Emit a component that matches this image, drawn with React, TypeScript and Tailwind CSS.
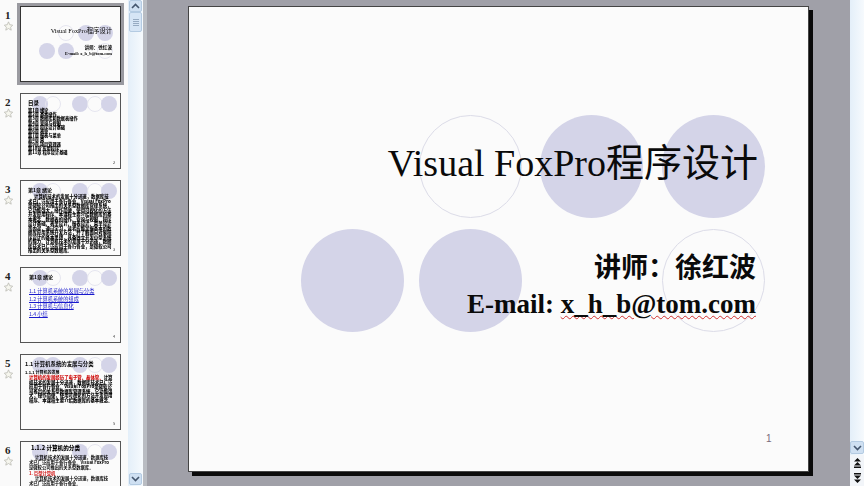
import React from "react";

type C = { x: number; y: number; o?: boolean };

function Dot({ x, y, o }: C) {
  return (
    <span
      style={{ left: x - 8, top: y - 8 }}
      className={
        o
          ? "absolute w-[16px] h-[16px] rounded-full border border-[#e6e6f0]"
          : "absolute w-[16px] h-[16px] rounded-full bg-[#d4d4e8]"
      }
    />
  );
}

const topDots: C[] = [
  { x: 19, y: 10 },
  { x: 32, y: 10, o: true },
  { x: 59, y: 10 },
  { x: 74, y: 10, o: true },
  { x: 88, y: 10 },
];

function Thumb({
  n,
  dots,
  children,
  selected,
}: {
  n: number;
  dots: C[];
  children: React.ReactNode;
  selected?: boolean;
}) {
  return (
    <div className="flex h-[87px] shrink-0">
      <div className="w-[20px] pl-[3px] pt-[3px] flex flex-col items-start">
        <span className="pl-[2px] text-[11px] leading-[12px] font-bold font-['Liberation_Serif',serif] text-[#222]">{n}</span>
        <svg width="11" height="10" viewBox="0 0 24 24" fill="#f6f6ee" stroke="#bcbcb4" strokeWidth="2">
          <path d="M12 2l3 7 7 1-5 5 1.5 7-6.5-4-6.5 4L7 15l-5-5 7-1z" />
        </svg>
      </div>
      <div
        className={
          selected
            ? "w-[101px] h-[76px] bg-[#fbfbfb] border border-[#333] outline-[3px] outline-[#9a9aa0] relative overflow-hidden blur-[0.3px]"
            : "w-[101px] h-[76px] bg-[#fbfbfb] border border-[#555] relative overflow-hidden blur-[0.3px]"
        }
      >
        {dots.map((d, i) => (
          <Dot key={i} {...d} />
        ))}
        <div className="relative h-full font-['Noto_Sans_CJK_SC','Liberation_Sans',sans-serif] text-black">{children}</div>
      </div>
    </div>
  );
}

const para3 =
  "计算机技术的发展十分迅速，数据库技术已广泛应用于各行各业。Visual FoxPro是微软公司推出的关系型数据库管理系统，它功能强大，操作简便，使用可视化的方法开发应用程序。本课程主要介绍数据库的基本概念、数据表的操作、查询与视图、程序设计基础、表单设计、报表设计、菜单设计等内容，通过学习，读者应能掌握基本的数据库应用系统开发方法，并了解面向对象程序设计的基本思想，具备独立开发小型系统的能力。计算机技术的发展十分迅速，数据库技术已广泛应用于各行各业，是微软公司推出的关系型数据库。";

const para5 =
  "计算机技术的发展十分迅速，数据库技术已广泛应用于各行各业。Visual FoxPro是微软公司推出的关系型数据库管理系统，它功能强大，操作简便，使用可视化的方法开发应用程序。本课程主要介绍数据库的基本概念。";

export default function App() {
  return (
    <div className="w-[864px] h-[486px] overflow-hidden flex bg-[#a0a0a8]">
      <div className="w-[128px] shrink-0 bg-[#fafafa] flex flex-col pt-[6px] overflow-hidden">
        <Thumb n={1} selected dots={[{ x: 45, y: 26, o: true }, { x: 65, y: 26 }, { x: 84, y: 26 }, { x: 26, y: 44 }, { x: 45, y: 44 }, { x: 84, y: 44, o: true }]}>
          <div className="flex flex-col items-end pr-[8px] pt-[20px]">
            <div className="text-[6.3px] leading-[8px] font-['Liberation_Serif','Noto_Sans_CJK_SC',serif]">Visual FoxPro程序设计</div>
            <div className="text-[4.6px] leading-[7px] font-bold mt-[9px]">讲师：徐红波</div>
            <div className="text-[4.4px] leading-[6px] font-bold font-['Liberation_Serif',serif]">E-mail: x_h_b@tom.com</div>
          </div>
        </Thumb>
        <Thumb n={2} dots={topDots}>
          <div className="pl-[7px] pt-[5px]">
            <div className="text-[5.5px] leading-[9px] font-bold">目录</div>
            {["第1章 绪论", "第2章 基本操作", "第3章 数据库和数据表操作", "第4章 查询与视图", "第5章 程序设计基础", "第6章 表单", "第7章 报表与菜单", "第8章 类", "第9章 项目管理器", "第10章 应用程序", "第11章 程序设计基础"].map((t) => (
              <div key={t} className="text-[4.2px] leading-[4.2px] font-black whitespace-nowrap">{t}</div>
            ))}
            <div className="absolute right-[5px] bottom-[3px] text-[3px] leading-[4px]">2</div>
          </div>
        </Thumb>
        <Thumb n={3} dots={topDots}>
          <div className="px-[7px] pt-[5px]">
            <div className="text-[5px] leading-[8px] font-bold">第1章 绪论</div>
            <div className="text-[4.4px] leading-[4.5px] font-black indent-[6px]">{para3}</div>
            <div className="absolute right-[5px] bottom-[3px] text-[3px] leading-[4px]">3</div>
          </div>
        </Thumb>
        <Thumb n={4} dots={topDots}>
          <div className="pl-[8px] pt-[5px]">
            <div className="text-[5px] leading-[8px] font-bold mb-[6px]">第1章 绪论</div>
            {["1.1 计算机系统的发展与分类", "1.2 计算机系统的组成", "1.3 计算机与信息化", "1.4 小结"].map((t) => (
              <div key={t} className="text-[5.2px] leading-[7.5px] text-[#1a1acc] underline whitespace-nowrap">{t}</div>
            ))}
            <div className="absolute right-[5px] bottom-[3px] text-[3px] leading-[4px]">4</div>
          </div>
        </Thumb>
        <Thumb n={5} dots={[{ x: 19, y: 10 }, { x: 32, y: 10 }, { x: 59, y: 10 }, { x: 74, y: 10, o: true }, { x: 88, y: 10 }]}>
          <div className="pl-[4px] pt-[5px]">
            <div className="text-[5.4px] leading-[8px] font-bold mb-[2px] whitespace-nowrap">1.1 计算机系统的发展与分类</div>
            <div className="text-[4px] leading-[5px] font-bold">1.1.1 计算机的发展</div>
            <div className="text-[4.4px] leading-[4.5px] font-black pl-[4px] pr-[6px]">
              <span className="text-[#d01010]">计算机的发展经历了电子管、晶体管、</span>
              {para5}
            </div>
            <div className="absolute right-[5px] bottom-[3px] text-[3px] leading-[4px]">5</div>
          </div>
        </Thumb>
        <Thumb n={6} dots={topDots}>
          <div className="px-[8px] pt-[2px]">
            <div className="text-[5.6px] leading-[8px] font-black mb-[3px] pl-[2px] whitespace-nowrap">1.1.2 计算机的分类</div>
            <div className="text-[4.3px] leading-[5px] font-bold indent-[6px]">计算机技术的发展十分迅速，数据库技术已广泛应用于各行各业。Visual FoxPro是微软公司推出的关系型数据库。</div>
            <div className="text-[4.3px] leading-[6px] font-bold text-[#d01010]">1. 巨型计算机</div>
            <div className="text-[4.3px] leading-[5px] font-bold indent-[6px]">计算机技术的发展十分迅速，数据库技术已广泛应用于各行各业。</div>
          </div>
        </Thumb>
      </div>

      <div className="w-[15px] shrink-0 bg-gradient-to-r from-[#e4eff9] to-[#f6fafd] flex flex-col justify-between">
        <div className="flex flex-col items-center">
          <div className="w-[13px] h-[12px] bg-[#cfe0f2] border border-[#b4cbe2] rounded-[2px] flex items-center justify-center">
            <svg width="9" height="6" viewBox="0 0 9 6" fill="none" stroke="#44566e" strokeWidth="1.6"><path d="M1 5l3.5-3.5L8 5" /></svg>
          </div>
          <div className="w-[13px] h-[20px] bg-[#d6e5f5] border border-[#b4cbe2] rounded-[2px] flex flex-col items-center justify-center gap-[1px]">
            <span className="w-[6px] h-px bg-[#97abc2]" />
            <span className="w-[6px] h-px bg-[#97abc2]" />
            <span className="w-[6px] h-px bg-[#97abc2]" />
            <span className="w-[6px] h-px bg-[#97abc2]" />
          </div>
        </div>
        <div className="flex justify-center pb-[1px]">
          <div className="w-[13px] h-[12px] bg-[#cfe0f2] border border-[#b4cbe2] rounded-[2px] flex items-center justify-center">
            <svg width="9" height="6" viewBox="0 0 9 6" fill="none" stroke="#44566e" strokeWidth="1.6"><path d="M1 1l3.5 3.5L8 1" /></svg>
          </div>
        </div>
      </div>
      <div className="w-[4px] shrink-0 bg-[#b9bcc2]" />

      <div className="flex-1 pl-[41px] pt-[6px]">
        <div className="relative w-[621px] h-[466px] bg-[#fbfbfb] border border-[#444] shadow-[4px_4px_0_#0a0a0a]">
          {[
            { x: 230, y: 108, o: true },
            { x: 351, y: 108 },
            { x: 473, y: 108 },
            { x: 112, y: 222 },
            { x: 230, y: 222 },
            { x: 473, y: 222, o: true },
          ].map((c, i) => (
            <span
              key={i}
              style={{ left: c.x, top: c.y }}
              className={
                c.o
                  ? "absolute w-[103px] h-[103px] rounded-full border border-[#dcdce8]"
                  : "absolute w-[103px] h-[103px] rounded-full bg-[#d4d4e8]"
              }
            />
          ))}
          <div className="relative flex flex-col items-end pr-[50px] pt-[132px] font-['Liberation_Serif','Noto_Sans_CJK_SC',serif] text-[#0a0a0a]">
            <div className="text-[38px] leading-[48px] whitespace-nowrap">Visual FoxPro程序设计</div>
            <div className="text-[27px] leading-[38px] font-bold mt-[60px] pr-[2px] font-['Noto_Sans_CJK_SC',sans-serif] whitespace-nowrap">讲师：徐红波</div>
            <div className="text-[27px] leading-[38px] font-bold pr-[2px] whitespace-nowrap">
              E-mail: <span className="underline decoration-wavy decoration-[#d03030] decoration-1 underline-offset-2">x_h_b@tom.com</span>
            </div>
          </div>
          <div className="absolute left-[577px] top-[425px] text-[10px] leading-[14px] text-[#7a6a7a] font-['Liberation_Sans',sans-serif]">1</div>
        </div>
      </div>

      <div className="w-[14px] shrink-0 bg-gradient-to-r from-[#e4eff9] to-[#f6fafd] flex flex-col justify-end">
        <div className="h-[13px] mb-[1px] bg-[#cfe0f2] border border-[#b4cbe2] rounded-[2px] flex items-center justify-center">
          <svg width="9" height="6" viewBox="0 0 9 6" fill="none" stroke="#44566e" strokeWidth="1.6"><path d="M1 1l3.5 3.5L8 1" /></svg>
        </div>
        <div className="h-[15px] bg-[#f2f5f9] flex items-center justify-center">
          <svg width="9" height="10" viewBox="0 0 9 10" fill="#111"><path d="M4.5 0L8 3.5H1zM4.5 4L8 7.5H1zM1 8.5h7V10H1z" /></svg>
        </div>
        <div className="h-[16px] bg-[#f2f5f9] flex items-center justify-center">
          <svg width="9" height="10" viewBox="0 0 9 10" fill="#111"><path d="M1 0h7v1.5H1zM1 2.5h7L4.5 6zM1 6.5h7L4.5 10z" /></svg>
        </div>
      </div>
    </div>
  );
}
